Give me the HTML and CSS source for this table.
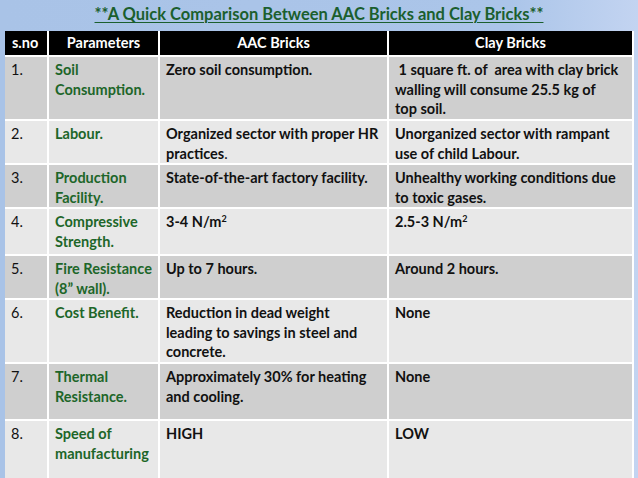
FILE: index.html
```html
<!DOCTYPE html>
<html>
<head>
<meta charset="utf-8">
<link rel="stylesheet" href="styles.css">
</head>
<body>
<div class="slide">
  <h1 class="title">**A Quick Comparison Between AAC Bricks and Clay Bricks**</h1>
  <table class="cmp">
    <colgroup>
      <col class="c1"><col class="c2"><col class="c3"><col class="c4">
    </colgroup>
    <thead>
      <tr class="hd">
        <th class="left">s.no</th>
        <th>Parameters</th>
        <th>AAC Bricks</th>
        <th>Clay Bricks</th>
      </tr>
    </thead>
    <tbody>
      <tr class="dark r1">
        <td class="no">1.</td>
        <td class="par">Soil<br>Consumption.</td>
        <td>Zero soil consumption.</td>
        <td>&nbsp;1 square ft. of &nbsp;area with clay brick<br>walling will consume 25.5 kg of<br>top soil.</td>
      </tr>
      <tr class="light r2">
        <td class="no">2.</td>
        <td class="par">Labour.</td>
        <td>Organized sector with proper HR<br>practices<span class="reg">.</span></td>
        <td>Unorganized sector with rampant<br>use of child Labour.</td>
      </tr>
      <tr class="dark r3">
        <td class="no">3.</td>
        <td class="par">Production<br>Facility.</td>
        <td>State-of-the-art factory facility.</td>
        <td>Unhealthy working conditions due<br>to toxic gases.</td>
      </tr>
      <tr class="light r4">
        <td class="no">4.</td>
        <td class="par">Compressive<br>Strength.</td>
        <td>3-4 N/m<sup>2</sup></td>
        <td>2.5-3 N/m<sup>2</sup></td>
      </tr>
      <tr class="dark r5">
        <td class="no">5.</td>
        <td class="par">Fire Resistance<br>(8&rdquo; wall).</td>
        <td>Up to 7 hours.</td>
        <td>Around 2 hours.</td>
      </tr>
      <tr class="light r6">
        <td class="no">6.</td>
        <td class="par">Cost Benefit.</td>
        <td>Reduction in dead weight<br>leading to savings in steel and<br>concrete.</td>
        <td>None</td>
      </tr>
      <tr class="dark r7">
        <td class="no">7.</td>
        <td class="par">Thermal<br>Resistance.</td>
        <td>Approximately 30% for heating<br>and cooling.</td>
        <td>None</td>
      </tr>
      <tr class="light r8">
        <td class="no">8.</td>
        <td class="par">Speed of<br>manufacturing</td>
        <td>HIGH</td>
        <td>LOW</td>
      </tr>
    </tbody>
  </table>
</div>
</body>
</html>
```

FILE: styles.css
```css
html, body {
  margin: 0;
  padding: 0;
}
body {
  width: 638px;
  height: 478px;
  overflow: hidden;
  background: linear-gradient(90deg, #a9c3e7 0%, #abc5e9 80%, #c3d4f1 100%);
  font-family: "Lato", "Liberation Sans", sans-serif;
}
.slide {
  padding: 0 5px 0 5px;
}
.title {
  margin: 0;
  height: 31px;
  padding-top: 3px;
  box-sizing: border-box;
  text-align: center;
  font-size: 16.5px;
  line-height: 22px;
  font-weight: 700;
  color: #1b5f2e;
  text-decoration: underline;
  text-decoration-thickness: 1px;
  text-underline-offset: 2px;
}
.cmp {
  width: 628px;
  border-collapse: collapse;
  table-layout: fixed;
  font-size: 14.5px;
  line-height: 19.5px;
  font-weight: 700;
  color: #111111;
}
.c1 { width: 43px; }
.c2 { width: 111px; }
.c3 { width: 229px; }
.c4 { width: 245px; }
.cmp th, .cmp td {
  box-sizing: border-box;
  border: 2px solid #ffffff;
  padding: 3px 6px 0 6px;
  vertical-align: top;
  white-space: nowrap;
  overflow: hidden;
}
.cmp tr > :first-child {
  border-left: 0;
}
.cmp thead th {
  border-top: 0;
}
.hd th {
  background: #000;
  color: #fff;
  height: 25px;
  padding-top: 2px;
  text-align: center;
  font-weight: 700;
}
.hd th.left { text-align: left; padding-left: 7px; }
.dark td { background: #cfcfcf; }
.light td { background: #e8e8e8; }
.no { font-weight: 400; }
.par { color: #1d6629; }
.reg { font-weight: 400; }
sup {
  font-size: 9px;
  line-height: 0;
  vertical-align: 5px;
}
.r1 td { height: 64px; }
.r2 td { height: 44px; }
.r3 td { height: 43px; }
.r4 td { height: 47px; }
.r5 td { height: 44px; }
.r6 td { height: 64px; }
.r7 td { height: 57px; }
.r8 td { height: 62px; }
```
